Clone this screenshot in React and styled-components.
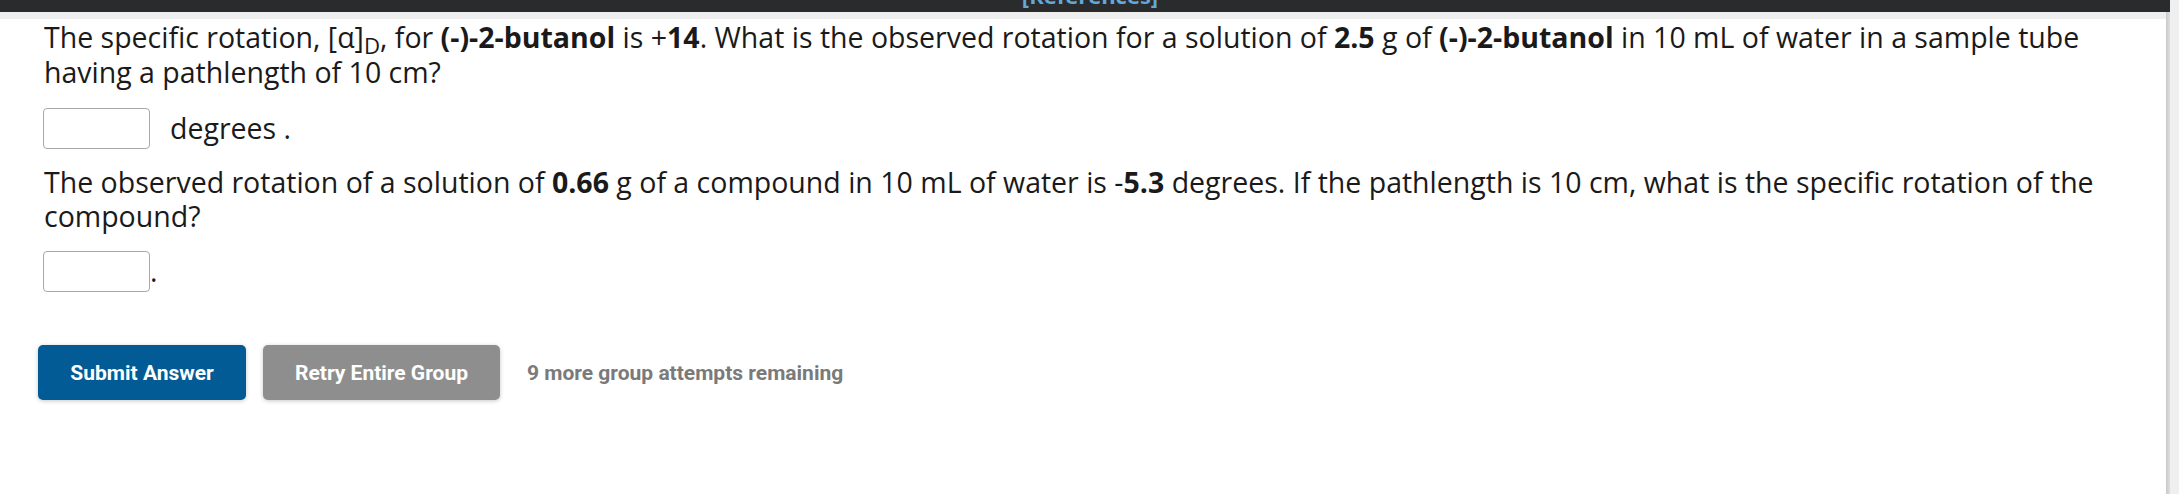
import React from 'react';
import styled, {createGlobalStyle} from 'styled-components';

const GlobalStyle = createGlobalStyle`
    html, body {
        margin: 0;
        padding: 0;
        background: #fff;
    }
    body {
        font-family: "Open Sans", "Liberation Sans", sans-serif;
        color: #1a1a1a;
    }
`

const Page = styled.div`
    display: flex;
    width: 2179px;
    height: 494px;
    overflow: hidden;
`
const Main = styled.div`
    display: flex;
    flex-direction: column;
    width: 2170px;
`
const TopBar = styled.div`
    height: 12px;
    background: #2a2b2d;
    display: flex;
    justify-content: center;
    overflow: hidden;
`
const RefLink = styled.span`
    font-family: "Open Sans", sans-serif;
    font-weight: 700;
    font-size: 22px;
    line-height: 22px;
    color: #62a8dc;
    margin-top: -16px;
    margin-left: 10px;
`
const Body = styled.div`
    flex: 1;
    display: flex;
`
const Content = styled.div`
    flex: 1;
    display: flex;
    flex-direction: column;
    background: #fff;
    border-top: 7px solid #eeeeee;
`
const Edge = styled.div`
    width: 4px;
    background: linear-gradient(to right, #c9c9c9, #dedede);
`
const Rail = styled.div`
    flex: 1;
    background: #efefef;
`
const Inner = styled.div`
    padding: 1px 58px 0 44px;
`
const Para = styled.p`
    margin: 0;
    font-size: 28.5px;
    line-height: 34.75px;
    color: #1a1a1a;
`
const Sub = styled.span`
    font-size: 0.78em;
    line-height: 1;
    position: relative;
    top: 0.25em;
`
const AnswerRow = styled.div`
    display: flex;
    align-items: center;
    gap: ${p => p.$gap || 0}px;
    margin: ${p => p.$top}px 0 ${p => p.$bottom}px -1px;
    font-size: 28.5px;
    line-height: 34.75px;
    color: #1a1a1a;
`
const Field = styled.input`
    box-sizing: border-box;
    width: 107px;
    height: 41px;
    margin: 0;
    border: 1.5px solid #a8a8a8;
    border-radius: 4px;
    background: #fff;
    outline: none;
`
const Actions = styled.div`
    display: flex;
    align-items: center;
    gap: 17px;
    margin-left: -6px;
`
const Button = styled.button`
    height: 55px;
    width: ${p => p.$w}px;
    border: none;
    border-radius: 5px;
    background: ${p => p.$bg};
    color: #fff;
    font-family: Roboto, "Liberation Sans", sans-serif;
    font-weight: 700;
    font-size: 21px;
    box-shadow: 0 1px 4px rgba(0, 0, 0, 0.22);
    cursor: pointer;
`
const Remaining = styled.span`
    font-family: Roboto, "Liberation Sans", sans-serif;
    font-weight: 700;
    font-size: 21px;
    color: #7a7a7a;
    margin-left: 10px;
`

export default function App() {
    return (
        <>
            <GlobalStyle />
            <Page>
                <Main>
                    <TopBar>
                        <RefLink>[References]</RefLink>
                    </TopBar>
                    <Body>
                        <Content>
                            <Inner>
                                <Para>
                                    The specific rotation, [α]<Sub>D</Sub>, for <b>(-)-2-butanol</b> is +<b>14</b>. What is the observed rotation for a solution of <b>2.5</b> g of <b>(-)-2-butanol</b> in 10 mL of water in a sample tube having a pathlength of 10 cm?
                                </Para>
                                <AnswerRow $top={18} $bottom={16} $gap={20}>
                                    <Field type="text" />
                                    <span>degrees .</span>
                                </AnswerRow>
                                <Para>
                                    The observed rotation of a solution of <b>0.66</b> g of a compound in 10 mL of water is -<b>5.3</b> degrees. If the pathlength is 10 cm, what is the specific rotation of the compound?
                                </Para>
                                <AnswerRow $top={17} $bottom={53}>
                                    <Field type="text" />
                                    <span>.</span>
                                </AnswerRow>
                                <Actions>
                                    <Button $w={208} $bg="#035b95">Submit Answer</Button>
                                    <Button $w={237} $bg="#8e8e8e">Retry Entire Group</Button>
                                    <Remaining>9 more group attempts remaining</Remaining>
                                </Actions>
                            </Inner>
                        </Content>
                        <Edge />
                    </Body>
                </Main>
                <Rail />
            </Page>
        </>
    );
}
